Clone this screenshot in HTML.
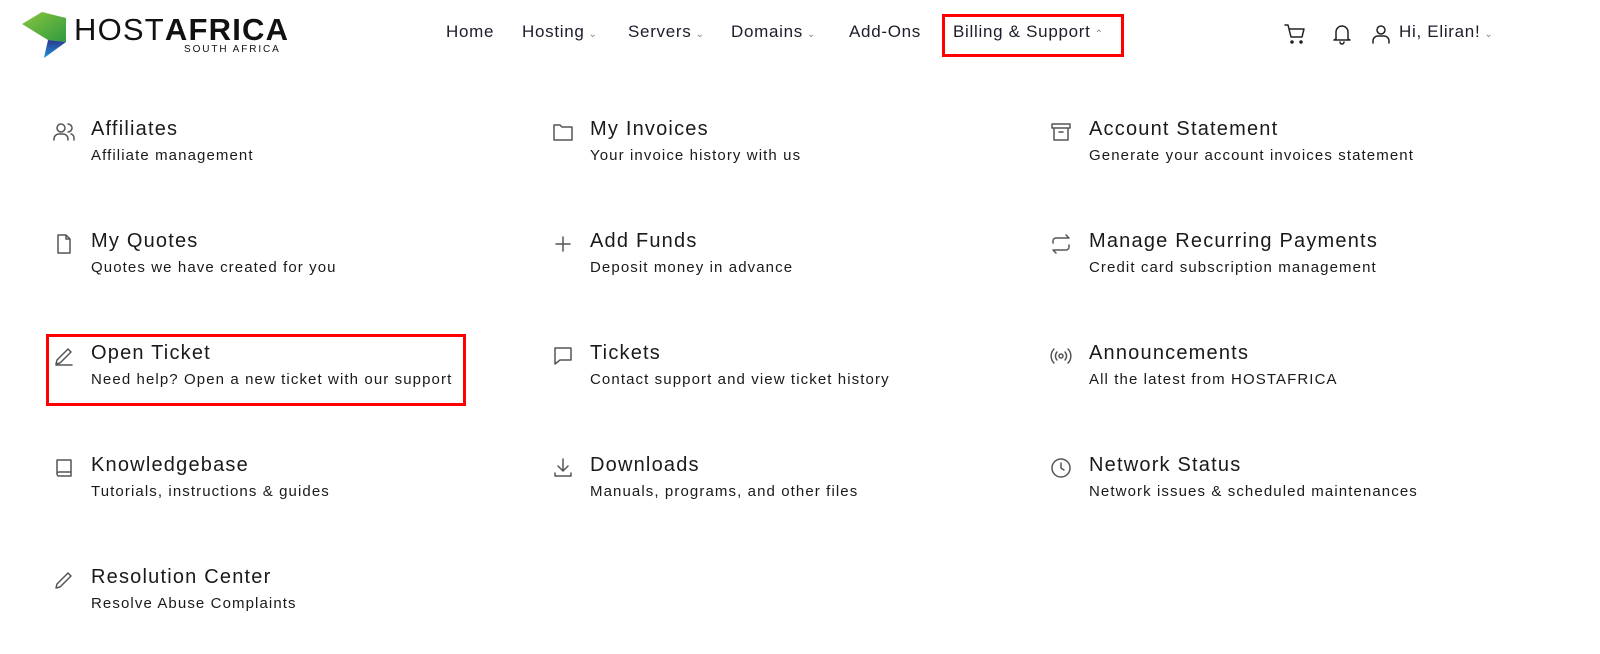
<!DOCTYPE html>
<html><head><meta charset="utf-8"><style>
*{margin:0;padding:0;box-sizing:border-box}
body{width:1600px;height:654px;background:#fff;font-family:"Liberation Sans",sans-serif;color:#1a1a1a;position:relative;overflow:hidden}
.a{position:absolute;white-space:nowrap}
.nav{font-size:17px;top:22px;color:#1d1d2b;letter-spacing:0.7px}
.car{font-size:10px;color:#888;margin-left:4px}
.t{font-size:20px;color:#1a1a1a;letter-spacing:1.2px}
.d{font-size:15px;color:#1a1a1a;letter-spacing:1.1px}
svg.i{position:absolute;width:24px;height:24px;fill:none;stroke:#555;stroke-width:1.5;stroke-linecap:round;stroke-linejoin:round}
.red{position:absolute;border:3px solid #f00}
</style></head><body>
<svg class="a" style="left:20px;top:10px" width="48" height="48" viewBox="0 0 48 48">
<defs><linearGradient id="g" x1="0" y1="0" x2="1" y2="1"><stop offset="0" stop-color="#8cc63f"/><stop offset="1" stop-color="#2e9a3f"/></linearGradient><linearGradient id="b" x1="0" y1="0" x2="0" y2="1"><stop offset="0" stop-color="#2b3990"/><stop offset="1" stop-color="#1e90d8"/></linearGradient></defs>
<polygon points="2,14 22,2 46,8 46,32 28,30" fill="url(#g)"/><polygon points="28,30 46,32 24,48" fill="url(#b)"/>
</svg>
<div class="a" style="left:74px;top:12px;font-size:31px;letter-spacing:1.2px;color:#111">HOST<b>AFRICA</b></div>
<div class="a" style="left:184px;top:44px;font-size:10px;letter-spacing:1.9px;color:#111">SOUTH AFRICA</div>
<div class="a nav" style="left:446px">Home</div>
<div class="a nav" style="left:522px">Hosting<span class="car">⌄</span></div>
<div class="a nav" style="left:628px">Servers<span class="car">⌄</span></div>
<div class="a nav" style="left:731px">Domains<span class="car">⌄</span></div>
<div class="a nav" style="left:849px">Add-Ons</div>
<div class="a nav" style="left:953px">Billing &amp; Support<span class="car">⌃</span></div>
<div class="red" style="left:942px;top:14px;width:182px;height:43px"></div>
<svg class="i" style="left:1283px;top:22px;stroke:#222" viewBox="0 0 24 24"><path d="M2 3h3l3 12h11l2-8H6"/><circle cx="9" cy="20" r="1" fill="#222"/><circle cx="18" cy="20" r="1" fill="#222"/></svg>
<svg class="i" style="left:1330px;top:22px;stroke:#222" viewBox="0 0 24 24"><path d="M6 17V10a6 6 0 0112 0v7l2 1H4z M10 20a2 2 0 004 0"/></svg>
<svg class="i" style="left:1369px;top:22px;stroke:#222" viewBox="0 0 24 24"><circle cx="12" cy="8" r="4"/><path d="M4 21v-2a5 5 0 015-5h6a5 5 0 015 5v2"/></svg>
<div class="a nav" style="left:1399px">Hi, Eliran!<span class="car">⌄</span></div>

<svg class="i" style="left:52px;top:120px" viewBox="0 0 24 24"><circle cx="9" cy="8" r="4"/><path d="M2 20v-1a5 5 0 015-5h4a5 5 0 015 5v1M16 4a4 4 0 010 8M19 14a4 4 0 013 4v2"/></svg>
<div class="a t" style="left:91px;top:118px">Affiliates</div><div class="a d" style="left:91px;top:147px">Affiliate management</div>
<svg class="i" style="left:52px;top:232px" viewBox="0 0 24 24"><path d="M14 3H6v18h12V7z M14 3v4h4"/></svg>
<div class="a t" style="left:91px;top:230px">My Quotes</div><div class="a d" style="left:91px;top:259px">Quotes we have created for you</div>
<svg class="i" style="left:52px;top:344px" viewBox="0 0 24 24"><path d="M4 20l1-4L16 5l3 3L8 19z M4 21h16"/></svg>
<div class="a t" style="left:91px;top:342px">Open Ticket</div><div class="a d" style="left:91px;top:371px">Need help? Open a new ticket with our support</div>
<div class="red" style="left:46px;top:334px;width:420px;height:72px"></div>
<svg class="i" style="left:52px;top:456px" viewBox="0 0 24 24"><path d="M5 4h14v16H7a2 2 0 01-2-2z M5 18a2 2 0 012-2h12"/></svg>
<div class="a t" style="left:91px;top:454px">Knowledgebase</div><div class="a d" style="left:91px;top:483px">Tutorials, instructions &amp; guides</div>
<svg class="i" style="left:52px;top:568px" viewBox="0 0 24 24"><path d="M4 20l1-4L16 5l3 3L8 19z"/></svg>
<div class="a t" style="left:91px;top:566px">Resolution Center</div><div class="a d" style="left:91px;top:595px">Resolve Abuse Complaints</div>

<svg class="i" style="left:551px;top:120px" viewBox="0 0 24 24"><path d="M3 5h6l2 2h10v13H3z"/></svg>
<div class="a t" style="left:590px;top:118px">My Invoices</div><div class="a d" style="left:590px;top:147px">Your invoice history with us</div>
<svg class="i" style="left:551px;top:232px" viewBox="0 0 24 24"><path d="M12 5v14M5 12h14"/></svg>
<div class="a t" style="left:590px;top:230px">Add Funds</div><div class="a d" style="left:590px;top:259px">Deposit money in advance</div>
<svg class="i" style="left:551px;top:344px" viewBox="0 0 24 24"><path d="M4 4h16v12H9l-5 4z"/></svg>
<div class="a t" style="left:590px;top:342px">Tickets</div><div class="a d" style="left:590px;top:371px">Contact support and view ticket history</div>
<svg class="i" style="left:551px;top:456px" viewBox="0 0 24 24"><path d="M12 3v12M7 10l5 5 5-5M4 17v3h16v-3"/></svg>
<div class="a t" style="left:590px;top:454px">Downloads</div><div class="a d" style="left:590px;top:483px">Manuals, programs, and other files</div>

<svg class="i" style="left:1049px;top:120px" viewBox="0 0 24 24"><path d="M3 4h18v4H3z M5 8v12h14V8 M10 12h4"/></svg>
<div class="a t" style="left:1089px;top:118px">Account Statement</div><div class="a d" style="left:1089px;top:147px">Generate your account invoices statement</div>
<svg class="i" style="left:1049px;top:232px" viewBox="0 0 24 24"><path d="M4 11V9a3 3 0 013-3h13l-3-3M20 13v2a3 3 0 01-3 3H4l3 3"/></svg>
<div class="a t" style="left:1089px;top:230px">Manage Recurring Payments</div><div class="a d" style="left:1089px;top:259px">Credit card subscription management</div>
<svg class="i" style="left:1049px;top:344px" viewBox="0 0 24 24"><circle cx="12" cy="12" r="2"/><path d="M8 8a6 6 0 000 8M16 8a6 6 0 010 8M5 5a10 10 0 000 14M19 5a10 10 0 010 14"/></svg>
<div class="a t" style="left:1089px;top:342px">Announcements</div><div class="a d" style="left:1089px;top:371px">All the latest from HOSTAFRICA</div>
<svg class="i" style="left:1049px;top:456px" viewBox="0 0 24 24"><circle cx="12" cy="12" r="9"/><path d="M12 7v5l3 2"/></svg>
<div class="a t" style="left:1089px;top:454px">Network Status</div><div class="a d" style="left:1089px;top:483px">Network issues &amp; scheduled maintenances</div>
</body></html>
